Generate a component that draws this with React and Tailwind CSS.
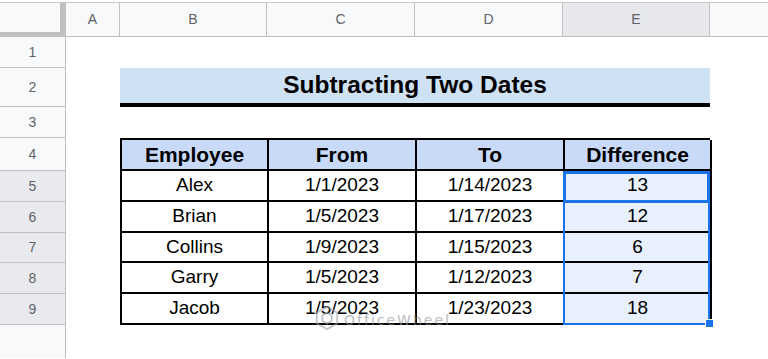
const colLetters = ['A', 'B', 'C', 'D', 'E'];
const rowHeights = ['h-[31px]', 'h-[39px]', 'h-[31px]', 'h-[33px]', 'h-[31px]', 'h-[31px]', 'h-[30px]', 'h-[31px]', 'h-[31px]'];

const rows = [
  ['Alex', '1/1/2023', '1/14/2023', '13'],
  ['Brian', '1/5/2023', '1/17/2023', '12'],
  ['Collins', '1/9/2023', '1/15/2023', '6'],
  ['Garry', '1/5/2023', '1/12/2023', '7'],
  ['Jacob', '1/5/2023', '1/23/2023', '18'],
];

function Watermark() {
  return (
    <div className="pointer-events-none absolute left-[314px] top-[304px] flex items-center gap-[4px] opacity-60">
      <svg width="26" height="28" viewBox="0 0 28 28" fill="none" stroke="#9aa0a6" strokeWidth="2">
        <path d="M14 2 L25 8 L25 20 L14 26 L3 20 L3 8 Z" />
        <path d="M14 8 L19 11 L19 17 L14 20 L9 17 L9 11 Z" />
      </svg>
      <span className="mt-[4px] text-[14px] tracking-[2px] text-[#8a8f95] font-['DejaVu_Sans',sans-serif]">OfficeWheel</span>
    </div>
  );
}

function DataTable() {
  return (
    <div className="relative">
      <div className="grid grid-cols-[147px_148px_148px_147px] border-l-2 border-t-2 border-black text-black">
        {['Employee', 'From', 'To', 'Difference'].map((h) => (
          <div key={h} className="flex h-[31px] items-center justify-center border-b-2 border-r-2 border-black bg-[#c9daf8] text-[21px] font-bold">
            {h}
          </div>
        ))}
        {rows.map((r, i) =>
          r.map((v, j) => (
            <div
              key={i + '-' + j}
              className={`flex items-center justify-center border-b-2 border-r-2 border-black text-[19px] ${i === 2 ? 'h-[30px]' : 'h-[31px]'} ${j === 3 ? 'bg-[#e8f0fe]' : 'bg-white'}`}
            >
              {v}
            </div>
          ))
        )}
      </div>
      {/* selected range E5:E9 */}
      <div className="pointer-events-none absolute left-[443px] top-[33px] h-[154px] w-[147px] border-2 border-[#1a73e8]" />
      <div className="pointer-events-none absolute left-[443px] top-[33px] h-[32px] w-[147px] border-[3px] border-[#1a73e8]" />
      <div className="pointer-events-none absolute left-[585px] top-[181px] h-[9px] w-[9px] border border-white bg-[#1a73e8]" />
    </div>
  );
}

export default function App() {
  return (
    <div className="relative h-[359px] w-[768px] overflow-hidden bg-white font-['Liberation_Sans',Arial,sans-serif]">
      <div className="h-[3px] border-b border-[#c7c7c7]" />

      <div className="grid h-[34px] grid-cols-[66px_54px_147px_148px_148px_147px_1fr] border-b border-[#c0c0c0] text-[14px] text-[#5f6368]">
        <div className="border-b-[4px] border-r-[6px] border-[#c0c0c0] bg-[#f8f9fa]" />
        {colLetters.map((c) => (
          <div
            key={c}
            className={`flex items-center justify-center border-r border-[#c0c0c0] ${c === 'E' ? 'bg-[#e6e8ec]' : 'bg-[#f8f9fa]'}`}
          >
            {c}
          </div>
        ))}
        <div className="bg-[#f8f9fa]" />
      </div>

      <div className="grid grid-cols-[66px_54px_147px_148px_148px_147px_1fr] grid-rows-[31px_39px_31px_33px_31px_31px_30px_31px_31px_1fr] h-[321px]">
        {rowHeights.map((h, i) => (
          <div
            key={i}
            style={{ gridRow: i + 1 }}
            className={`col-start-1 flex items-center justify-center border-b border-r border-[#c0c0c0] text-[14px] text-[#5f6368] ${i >= 4 ? 'bg-[#e8eaed]' : 'bg-[#f8f9fa]'}`}
          >
            {i + 1}
          </div>
        ))}
        <div className="col-start-1 row-start-10 border-r border-[#c0c0c0] bg-[#f8f9fa]" />

        <div className="col-start-3 col-span-4 row-start-2 flex items-center justify-center border-b-4 border-black bg-[#cfe2f3] text-[24.5px] font-bold text-black">
          Subtracting Two Dates
        </div>

        <div className="col-start-3 col-span-4 row-start-4 row-span-6">
          <DataTable />
        </div>
      </div>

      <Watermark />
    </div>
  );
}
